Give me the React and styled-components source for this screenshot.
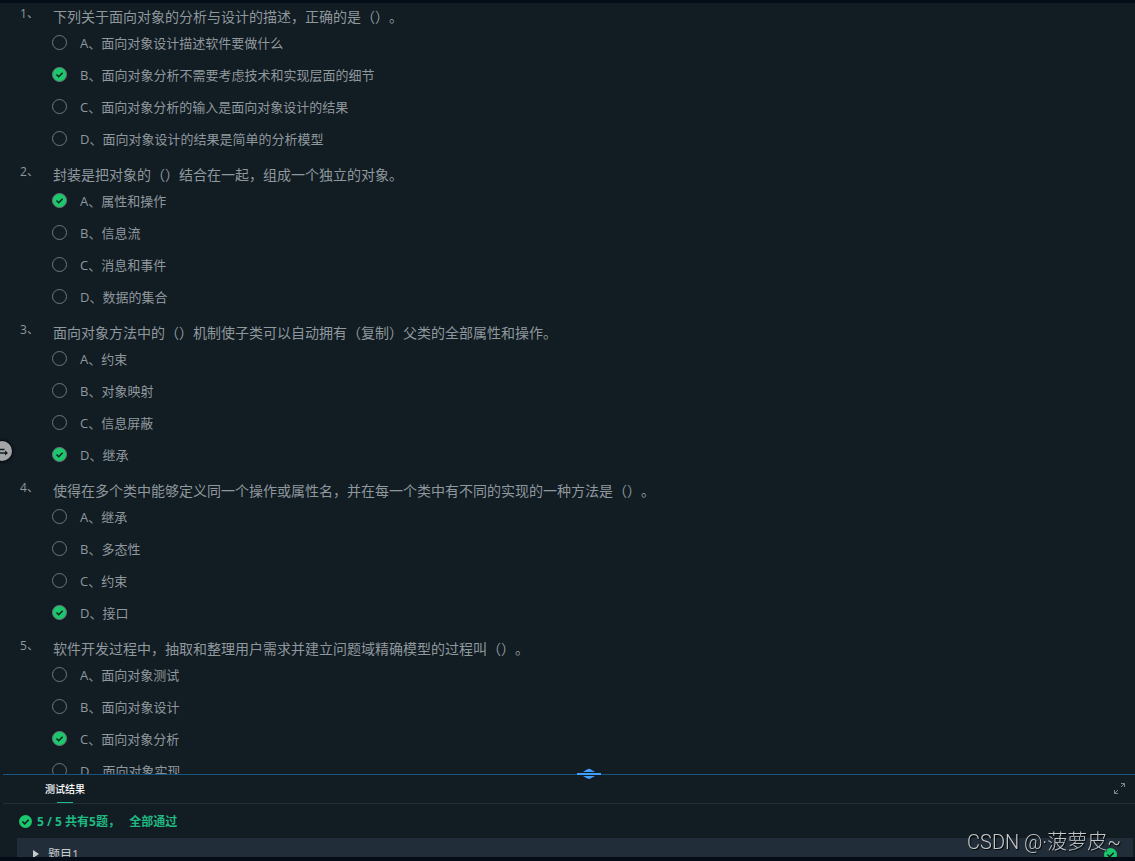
import React, { useState } from 'react';
import styled, { createGlobalStyle } from 'styled-components';

const GlobalStyle = createGlobalStyle`
    * {
        box-sizing: border-box;
    }

    body {
        margin: 0;
        background-color: #121c23;
        color: #8f989d;
        font-family: "Open Sans", "Noto Sans CJK SC", sans-serif;
        font-size: 13px;
        text-spacing-trim: space-all;
    }
`;

const Page = styled.div`
    display: flex;
    flex-direction: column;
    height: 100vh;
    overflow: hidden;
    border-top: 3px solid #040d17;
    border-bottom: 4px solid #040d17;
`;

const Questions = styled.main`
    flex: 1;
    min-height: 0;
    overflow: hidden;
    padding: 0 20px;
`;

const Question = styled.fieldset`
    display: grid;
    grid-template-columns: 33px 1fr;
    margin: 0;
    padding: 0;
    border: 0;
    min-width: 0;
`;

const QuestionNumber = styled.span`
    font-size: 12px;
    line-height: 22px;
`;

const QuestionBody = styled.div`
    padding-top: 4px;
`;

const QuestionTitle = styled.p`
    margin: 0;
    font-size: 14px;
    line-height: 20px;
`;

const Options = styled.div`
    display: grid;
    grid-auto-rows: 1fr;
    height: 127px;
    margin-bottom: 7px;
`;

const Option = styled.label`
    display: flex;
    align-items: center;
    gap: 13px;
    cursor: pointer;
`;

const RadioBox = styled.span`
    display: grid;
    width: 15px;
    height: 15px;
    margin-left: -1px;

    > * {
        grid-area: 1 / 1;
    }
`;

const Radio = styled.input`
    appearance: none;
    width: 15px;
    height: 15px;
    margin: 0;
    border: 1px solid #6b777d;
    border-radius: 50%;

    &:checked {
        background-color: #1bc86c;
    }
`;

const Panel = styled.section`
    position: relative;
    flex: 0 0 83px;
    min-height: 0;
    margin-left: 3px;
    border-top: 1px solid #18547f;
`;

const PanelContent = styled.div`
    height: 82px;
    overflow: hidden;
`;

const ResizeHandle = styled.button`
    position: absolute;
    top: -7px;
    left: 51.8%;
    width: 24px;
    height: 11px;
    padding: 0;
    border: 0;
    background: none;
    transform: translateX(-50%);
    cursor: row-resize;

    svg {
        display: block;
    }
`;

const TabBar = styled.div`
    display: flex;
    align-items: center;
    justify-content: space-between;
    height: 29px;
    padding: 0 10px 0 42px;
    border-bottom: 1px solid #232e37;
`;

const Tab = styled.button`
    align-self: stretch;
    padding: 0 0 2px;
    border: 0;
    background: linear-gradient(#1fbb85, #1fbb85) center bottom / 16px 1px no-repeat;
    color: #ffffff;
    font-family: inherit;
    font-size: 10px;
    font-weight: 500;
    cursor: pointer;
`;

const ExpandButton = styled.button`
    display: flex;
    padding: 0 0 2px;
    border: 0;
    background: none;
    color: #7b868c;
    cursor: pointer;
`;

const Summary = styled.p`
    display: flex;
    align-items: center;
    gap: 5px;
    height: 34px;
    margin: 0;
    padding-left: 16px;
    color: #20b982;
    font-size: 12px;
    font-weight: 700;
    white-space: pre;
`;

const ResultRow = styled.button`
    display: flex;
    align-items: center;
    gap: 9px;
    width: calc(100% - 16px);
    height: 32px;
    margin-left: 14px;
    padding: 0 16px;
    border: 0;
    background-color: #212e39;
    color: #c5cacd;
    font-family: inherit;
    font-size: 12px;
    cursor: pointer;
`;

const RowStatus = styled.span`
    display: flex;
    margin-left: auto;
`;

const SideToggle = styled.button`
    position: fixed;
    top: 441px;
    left: -8px;
    width: 20px;
    height: 20px;
    padding: 0;
    border: 0;
    border-radius: 50%;
    background-color: #a3a5a7;
    box-shadow: 0 0 4px #000000;
    cursor: pointer;

    svg {
        display: block;
    }
`;

const Watermark = styled.span`
    position: fixed;
    right: 14px;
    bottom: 5px;
    color: #c3c7ca;
    font-family: Roboto, "Noto Sans CJK SC", sans-serif;
    font-size: 20px;
    font-weight: 300;
    line-height: 28px;
    text-shadow: 1px 1px 1px #000000;
    pointer-events: none;
`;

const questions = [
    {
        title: '下列关于面向对象的分析与设计的描述，正确的是（）。',
        options: ['面向对象设计描述软件要做什么', '面向对象分析不需要考虑技术和实现层面的细节', '面向对象分析的输入是面向对象设计的结果', '面向对象设计的结果是简单的分析模型'],
        answer: 1,
    },
    {
        title: '封装是把对象的（）结合在一起，组成一个独立的对象。',
        options: ['属性和操作', '信息流', '消息和事件', '数据的集合'],
        answer: 0,
    },
    {
        title: '面向对象方法中的（）机制使子类可以自动拥有（复制）父类的全部属性和操作。',
        options: ['约束', '对象映射', '信息屏蔽', '继承'],
        answer: 3,
    },
    {
        title: '使得在多个类中能够定义同一个操作或属性名，并在每一个类中有不同的实现的一种方法是（）。',
        options: ['继承', '多态性', '约束', '接口'],
        answer: 3,
    },
    {
        title: '软件开发过程中，抽取和整理用户需求并建立问题域精确模型的过程叫（）。',
        options: ['面向对象测试', '面向对象设计', '面向对象分析', '面向对象实现'],
        answer: 2,
    },
];

const CheckMark = () => (
    <svg width="15" height="15" viewBox="0 0 15 15" fill="none" pointerEvents="none">
        <path d="M4.5 7.5l2.2 2.2 3.9-4" stroke="#121c23" strokeWidth="1.5" />
    </svg>
);

const CheckCircle = () => (
    <svg width="13" height="13" viewBox="0 0 13 13" fill="none">
        <circle cx="6.5" cy="6.5" r="6.5" fill="#1bc86c" />
        <path d="M3.4 6.5l2.3 2.3 4-4.1" stroke="#121c23" strokeWidth="1.6" />
    </svg>
);

const App = () => {

    const [answers, setAnswers] = useState(questions.map(({ answer }) => answer));

    const choose = (question, option) => {
        setAnswers(answers.map((answer, index) => (index === question ? option : answer)));
    };

    return (
        <>
            <GlobalStyle />
            <Page>
                <Questions>
                    {questions.map(({ title, options }, index) => (
                        <Question key={title} aria-labelledby={`title-${index}`}>
                            <QuestionNumber>{index + 1}、</QuestionNumber>
                            <QuestionBody>
                                <QuestionTitle id={`title-${index}`}>{title}</QuestionTitle>
                                <Options>
                                    {options.map((text, option) => (
                                        <Option key={text}>
                                            <RadioBox>
                                                <Radio
                                                    type="radio"
                                                    name={`question-${index}`}
                                                    checked={answers[index] === option}
                                                    onChange={() => choose(index, option)}
                                                />
                                                {answers[index] === option && <CheckMark />}
                                            </RadioBox>
                                            <span>{'ABCD'[option]}、{text}</span>
                                        </Option>
                                    ))}
                                </Options>
                            </QuestionBody>
                        </Question>
                    ))}
                </Questions>
                <Panel>
                    <ResizeHandle aria-label="调整高度">
                        <svg width="24" height="11" viewBox="0 0 24 11" fill="#409eff">
                            <path d="M6 4l4-2.6q2-1.2 4 0L18 4zM0 5h24v2H0zM6 8h12l-4 2.2q-2 1-4 0z" />
                        </svg>
                    </ResizeHandle>
                    <PanelContent>
                        <TabBar>
                            <Tab>测试结果</Tab>
                            <ExpandButton aria-label="展开">
                                <svg width="11" height="11" viewBox="0 0 11 11" fill="none" stroke="currentColor">
                                    <path d="M7 .5h3.5V4M10.5 .5L7 4M4 10.5H.5V7M.5 10.5L4 7" />
                                </svg>
                            </ExpandButton>
                        </TabBar>
                        <Summary>
                            <CheckCircle />
                            <span>5 / 5 共有5题，   全部通过</span>
                        </Summary>
                        <ResultRow>
                            <svg width="6" height="8" viewBox="0 0 6 8" fill="currentColor">
                                <path d="M0 0l6 4-6 4z" />
                            </svg>
                            题目1
                            <RowStatus><CheckCircle /></RowStatus>
                        </ResultRow>
                    </PanelContent>
                </Panel>
            </Page>
            <SideToggle aria-label="展开侧栏">
                <svg width="20" height="20" viewBox="0 0 20 20" fill="none" stroke="#121c23" strokeWidth="1.5">
                    <path d="M6 8.5h6.5M6 12h8" />
                    <path d="M13 9.5l3 2.5-3 2.5z" fill="#121c23" stroke="none" />
                </svg>
            </SideToggle>
            <Watermark>CSDN @·菠萝皮~</Watermark>
        </>
    );
}


export default App;
